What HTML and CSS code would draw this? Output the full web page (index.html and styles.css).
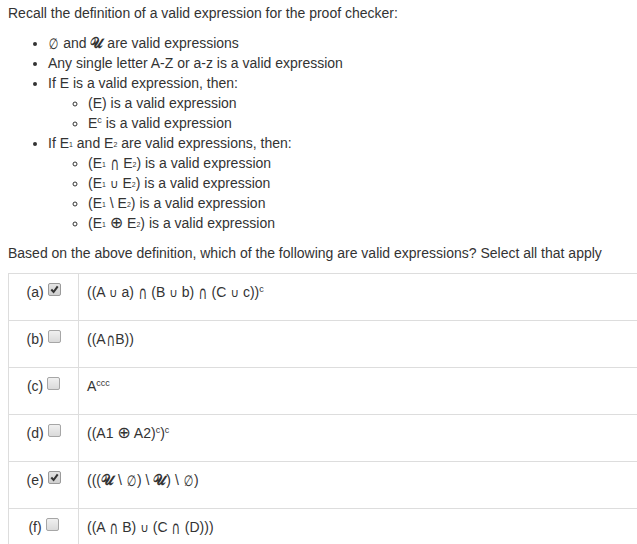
FILE: index.html
```html
<!DOCTYPE html>
<html>
<head>
<meta charset="utf-8">
<link rel="stylesheet" href="styles.css">
</head>
<body>
<div class="page">
  <p>Recall the definition of a valid expression for the proof checker:</p>
  <ul class="defs">
    <li><span class="empty">∅</span> and <span class="cal">𝒰</span> are valid expressions</li>
    <li>Any single letter A-Z or a-z is a valid expression</li>
    <li>If E is a valid expression, then:
      <ul>
        <li>(E) is a valid expression</li>
        <li>E<sup>c</sup> is a valid expression</li>
      </ul>
    </li>
    <li>If E<sub>1</sub> and E<sub>2</sub> are valid expressions, then:
      <ul>
        <li>(E<sub>1</sub> <span class="cap">∩</span> E<sub>2</sub>) is a valid expression</li>
        <li>(E<sub>1</sub> <span class="sym">∪</span> E<sub>2</sub>) is a valid expression</li>
        <li>(E<sub>1</sub> \ E<sub>2</sub>) is a valid expression</li>
        <li>(E<sub>1</sub> <span class="oplus">⊕</span> E<sub>2</sub>) is a valid expression</li>
      </ul>
    </li>
  </ul>
  <p>Based on the above definition, which of the following are valid expressions? Select all that apply</p>
  <div class="tablewrap">
  <table class="answers">
    <tr>
      <td class="opt">(a) <span class="cb checked"><svg viewBox="0 0 12 12"><path d="M2.5 6 L5 8.7 L9.5 2.5" fill="none" stroke="#333" stroke-width="2.2"/></svg></span></td>
      <td><p>((A <span class="sym">∪</span> a) <span class="cap">∩</span> (B <span class="sym">∪</span> b) <span class="cap">∩</span> (C <span class="sym">∪</span> c))<sup>c</sup></p></td>
    </tr>
    <tr>
      <td class="opt">(b) <span class="cb"></span></td>
      <td><p>((A<span class="cap">∩</span>B))</p></td>
    </tr>
    <tr>
      <td class="opt">(c) <span class="cb"></span></td>
      <td><p>A<sup>ccc</sup></p></td>
    </tr>
    <tr>
      <td class="opt">(d) <span class="cb"></span></td>
      <td><p>((A1 <span class="oplus">⊕</span> A2)<sup>c</sup>)<sup>c</sup></p></td>
    </tr>
    <tr>
      <td class="opt">(e) <span class="cb checked"><svg viewBox="0 0 12 12"><path d="M2.5 6 L5 8.7 L9.5 2.5" fill="none" stroke="#333" stroke-width="2.2"/></svg></span></td>
      <td><p>(((<span class="cal">𝒰</span> \ <span class="empty">∅</span>) \ <span class="cal">𝒰</span>) \ <span class="empty">∅</span>)</p></td>
    </tr>
    <tr>
      <td class="opt">(f) <span class="cb"></span></td>
      <td><p>((A <span class="cap">∩</span> B) <span class="sym">∪</span> (C <span class="cap">∩</span> (D)))</p></td>
    </tr>
  </table>
  </div>
</div>
</body>
</html>
```
FILE: styles.css
```css
html, body {
  margin: 0;
  padding: 0;
  overflow: hidden;
  background: #fff;
}
body {
  font-family: "Liberation Sans", Arial, sans-serif;
  font-size: 14px;
  line-height: 20px;
  color: #333;
}
.page {
  padding: 3px 0 0 8px;
}
p {
  margin: 0 0 10px 0;
}
ul {
  margin: 0 0 10px 0;
  padding-left: 40px;
}
ul ul {
  margin: 0;
  list-style-type: circle;
}
sup, sub {
  line-height: 0;
  position: relative;
  vertical-align: baseline;
}
sup {
  font-size: 9px;
  top: -5px;
}
sub {
  top: -1px;
  font-size: 7px;
}
.sym {
  font-family: "DejaVu Sans", sans-serif;
  font-size: 12px;
  line-height: 0;
}
.cap {
  display: inline-block;
  font-family: "DejaVu Sans", sans-serif;
  font-size: 13px;
  line-height: 0;
  transform: scale(0.9, 1.4);
  transform-origin: 50% 100%;
}
.empty {
  display: inline-block;
  font-family: "DejaVu Sans", sans-serif;
  font-size: 13px;
  line-height: 0;
  transform: scale(0.85, 1.15);
  transform-origin: 50% 100%;
}
.oplus {
  font-family: "DejaVu Sans", sans-serif;
  font-size: 16px;
  line-height: 0;
}
.cal {
  font-family: "DejaVu Serif", serif;
  font-size: 14px;
  font-weight: bold;
  line-height: 0;
}
.tablewrap {
  overflow: hidden;
}
.answers {
  border-collapse: collapse;
  width: 640px;
}
.answers td {
  border: 1px solid #ddd;
  padding: 8px;
  vertical-align: top;
  text-align: left;
}
.answers td.opt {
  width: 53px;
  text-align: center;
  white-space: nowrap;
}
.answers td p {
  margin: 0 0 10px 0;
}
.cb {
  display: inline-block;
  width: 11px;
  height: 11px;
  border: 1px solid #a6a6a6;
  border-radius: 2px;
  background: linear-gradient(#f0f0f0, #dadada);
  vertical-align: -1px;
  position: relative;
  top: -2px;
}
.cb.checked {
  background: linear-gradient(#e4e4e4, #cfcfcf);
  border-color: #9a9a9a;
}
.cb svg {
  display: block;
  width: 11px;
  height: 11px;
}
```
